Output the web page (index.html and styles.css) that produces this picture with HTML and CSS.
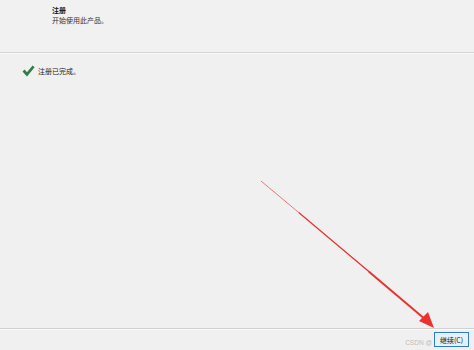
FILE: index.html
```html
<!DOCTYPE html>
<html lang="zh">
<head>
<meta charset="utf-8">
<link rel="stylesheet" href="styles.css">
</head>
<body>
<div class="win">
  <header class="head">
    <div class="title">注册</div>
    <div class="sub">开始使用此产品。</div>
  </header>
  <main class="main">
    <div class="status">
      <svg class="check" width="13" height="12" viewBox="0 0 13 12"><path d="M0.5 6.5 L2.6 4.6 L5 7.2 L10.6 0.5 L12.6 2.2 L5 11.5 Z" fill="#2f7d4a"/></svg>
      <span>注册已完成。</span>
    </div>
  </main>
  <footer class="foot">
    <span class="wm">CSDN @</span>
    <button class="btn">继续(C)</button>
  </footer>
  <svg class="arrow" width="474" height="350" viewBox="0 0 474 350">
    <line x1="261" y1="181" x2="300" y2="213.6" stroke="#ec6a68" stroke-width="0.9"/>
    <line x1="299" y1="212.8" x2="370" y2="272.6" stroke="#e8332f" stroke-width="1.3"/>
    <line x1="369" y1="271.8" x2="426" y2="320" stroke="#e8332f" stroke-width="2"/>
    <polygon points="434,328 419,321 428,312" fill="#e8332f"/>
  </svg>
</div>
</body>
</html>
```
FILE: styles.css
```css
html, body { margin: 0; padding: 0; }
body {
  width: 474px; height: 350px; overflow: hidden;
  background: #f0f0f0;
  font-family: "Noto Sans CJK SC", "Liberation Sans", sans-serif;
  font-size: 7px; color: #222;
}
.win { position: relative; width: 474px; height: 350px; display: flex; flex-direction: column; }
.head {
  height: 53px; box-sizing: border-box;
  padding: 6px 0 0 52px;
  background: #f1f1f1;
  border-bottom: 1px solid #d4d4d4;
  box-shadow: 0 1px 0 #fafafa;
  line-height: 9px;
}
.title { font-weight: bold; color: #111; }
.sub { margin-top: 1px; color: #333; }
.main { flex: 1; padding: 12px 0 0 22px; }
.status { display: flex; align-items: center; gap: 3px; }
.check { display: block; }
.foot {
  height: 22px; box-sizing: border-box;
  border-top: 1px solid #d0d0d0;
  box-shadow: inset 0 1px 0 #fbfbfb;
  display: flex; align-items: flex-start; justify-content: flex-end;
  padding: 3px 5px 0 0;
  position: relative;
}
.wm { position: absolute; right: 42px; top: 10px; color: #bdbdbd; font-size: 6.5px; font-family: "Liberation Sans", "Noto Sans CJK SC", sans-serif; }
.btn {
  position: relative;
  width: 35px; height: 15px; padding: 0;
  font: inherit; font-size: 7px; color: #111;
  background: #e5f1fb;
  border: 1px solid #2f7bd2;
  box-shadow: inset 0 0 0 1px #e9f3fc;
}
.arrow { position: absolute; left: 0; top: 0; pointer-events: none; }
```
